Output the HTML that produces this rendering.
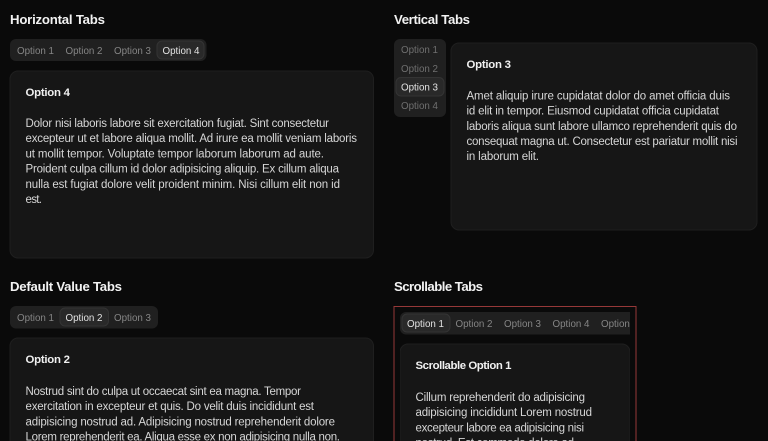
<!DOCTYPE html>
<html lang="en">
<head>
<meta charset="utf-8">
<title>Tabs</title>
<style>
html,body{margin:0;padding:0;background:#0a0a0a;width:768px;height:441px;overflow:hidden}
svg{display:block;filter:blur(.3px)}
text{font-family:"Liberation Sans",sans-serif}
.h{font-size:13.2px;font-weight:700;fill:#f2f2f2}
.b{font-size:11.4px;font-weight:700;fill:#f0f0f0}
.p{font-size:11.5px;fill:#d6d6d6}
.t{font-size:9.8px;fill:#858585}
.a{font-size:9.8px;fill:#e2e2e2}
.list{fill:#202020}
.act{fill:#292929;stroke:#343434;stroke-width:1}
.panel{fill:#161616;stroke:#1f1f1f;stroke-width:1}
</style>
</head>
<body>
<svg width="768" height="441" viewBox="0 0 768 441" xmlns="http://www.w3.org/2000/svg">
<defs>
<clipPath id="c"><rect x="400" y="306" width="230" height="135"/></clipPath>
<clipPath id="f"><rect x="0" y="0" width="768" height="441"/></clipPath>
</defs>
<rect width="768" height="441" fill="#0a0a0a"/>
<g clip-path="url(#f)">

<!-- Horizontal -->
<text class="h" x="10" y="24" textLength="95">Horizontal Tabs</text>
<rect class="list" x="10" y="39" width="196.5" height="22" rx="6"/>
<rect class="act" x="157" y="41" width="47" height="18" rx="5"/>
<text class="t" x="17" y="54" textLength="37">Option 1</text>
<text class="t" x="65.5" y="54" textLength="37">Option 2</text>
<text class="t" x="114" y="54" textLength="37">Option 3</text>
<text class="a" x="162.5" y="54" textLength="37">Option 4</text>
<rect class="panel" x="10" y="71" width="363.5" height="187" rx="8"/>
<text class="b" x="25.5" y="96" textLength="44.5">Option 4</text>
<text class="p" x="25.5" y="127" textLength="303.5">Dolor nisi laboris labore sit exercitation fugiat. Sint consectetur</text>
<text class="p" x="25.5" y="142.2" textLength="331.5">excepteur ut et labore aliqua mollit. Ad irure ea mollit veniam laboris</text>
<text class="p" x="25.5" y="157.4" textLength="298.5">ut mollit tempor. Voluptate tempor laborum laborum ad aute.</text>
<text class="p" x="25.5" y="172.6" textLength="313.5">Proident culpa cillum id dolor adipisicing aliquip. Ex cillum aliqua</text>
<text class="p" x="25.5" y="187.8" textLength="314.5">nulla est fugiat dolore velit proident minim. Nisi cillum elit non id</text>
<text class="p" x="25.5" y="203" textLength="16.5">est.</text>

<!-- Vertical -->
<text class="h" x="394" y="24" textLength="76">Vertical Tabs</text>
<rect class="list" x="394" y="39" width="52" height="78" rx="6"/>
<rect class="act" x="396" y="77.5" width="48" height="18.5" rx="5"/>
<text class="t" x="401" y="53" textLength="37" style="fill:#6f6f6f">Option 1</text>
<text class="t" x="401" y="72" textLength="37" style="fill:#6f6f6f">Option 2</text>
<text class="a" x="401" y="90.5" textLength="37">Option 3</text>
<text class="t" x="401" y="109" textLength="37" style="fill:#6f6f6f">Option 4</text>
<rect class="panel" x="451" y="43" width="306" height="187" rx="8"/>
<text class="b" x="466.5" y="68" textLength="44.5">Option 3</text>
<text class="p" x="466.5" y="99.5" textLength="263.5">Amet aliquip irure cupidatat dolor do amet officia duis</text>
<text class="p" x="466.5" y="114.7" textLength="252.5">id elit in tempor. Eiusmod cupidatat officia cupidatat</text>
<text class="p" x="466.5" y="130" textLength="270.5">laboris aliqua sunt labore ullamco reprehenderit quis do</text>
<text class="p" x="466.5" y="145" textLength="271">consequat magna ut. Consectetur est pariatur mollit nisi</text>
<text class="p" x="466.5" y="160" textLength="72.5">in laborum elit.</text>

<!-- Default value -->
<text class="h" x="10" y="291" textLength="112">Default Value Tabs</text>
<rect class="list" x="10" y="306" width="148" height="22.5" rx="6"/>
<rect class="act" x="60" y="308" width="48.5" height="18" rx="5"/>
<text class="t" x="17" y="321" textLength="37">Option 1</text>
<text class="a" x="65.5" y="321" textLength="37">Option 2</text>
<text class="t" x="114" y="321" textLength="37">Option 3</text>
<rect class="panel" x="10" y="338" width="363.5" height="140" rx="8"/>
<text class="b" x="25.5" y="363" textLength="44.5">Option 2</text>
<text class="p" x="25.5" y="395" textLength="275.5">Nostrud sint do culpa ut occaecat sint ea magna. Tempor</text>
<text class="p" x="25.5" y="410" textLength="288.5">exercitation in excepteur et quis. Do velit duis incididunt est</text>
<text class="p" x="25.5" y="425.4" textLength="309.5">adipisicing nostrud ad. Adipisicing nostrud reprehenderit dolore</text>
<text class="p" x="25.5" y="440.6" textLength="314.5">Lorem reprehenderit ea. Aliqua esse ex non adipisicing nulla non.</text>

<!-- Scrollable -->
<text class="h" x="394" y="291" textLength="89">Scrollable Tabs</text>
<rect x="394" y="306.5" width="242" height="150" fill="none" stroke="#963838" stroke-width="1"/>
<g clip-path="url(#c)">
<rect class="list" x="400" y="312" width="260" height="22.5" rx="6"/>
<rect class="act" x="402" y="314" width="48" height="18" rx="5"/>
<text class="a" x="407" y="327" textLength="37">Option 1</text>
<text class="t" x="455.5" y="327" textLength="37">Option 2</text>
<text class="t" x="504" y="327" textLength="37">Option 3</text>
<text class="t" x="552.5" y="327" textLength="37">Option 4</text>
<text class="t" x="601" y="327" textLength="37">Option 5</text>
<rect class="panel" x="400" y="344" width="230" height="140" rx="8"/>
<text class="b" x="415.5" y="369" textLength="96">Scrollable Option 1</text>
<text class="p" x="415.5" y="401" textLength="169.5">Cillum reprehenderit do adipisicing</text>
<text class="p" x="415.5" y="416" textLength="176.5">adipisicing incididunt Lorem nostrud</text>
<text class="p" x="415.5" y="431.5" textLength="168.5">excepteur labore ea adipisicing nisi</text>
<text class="p" x="415.5" y="446.5" textLength="158.5">nostrud. Est commodo dolore ad</text>
</g>
</g>
</svg>
</body>
</html>
